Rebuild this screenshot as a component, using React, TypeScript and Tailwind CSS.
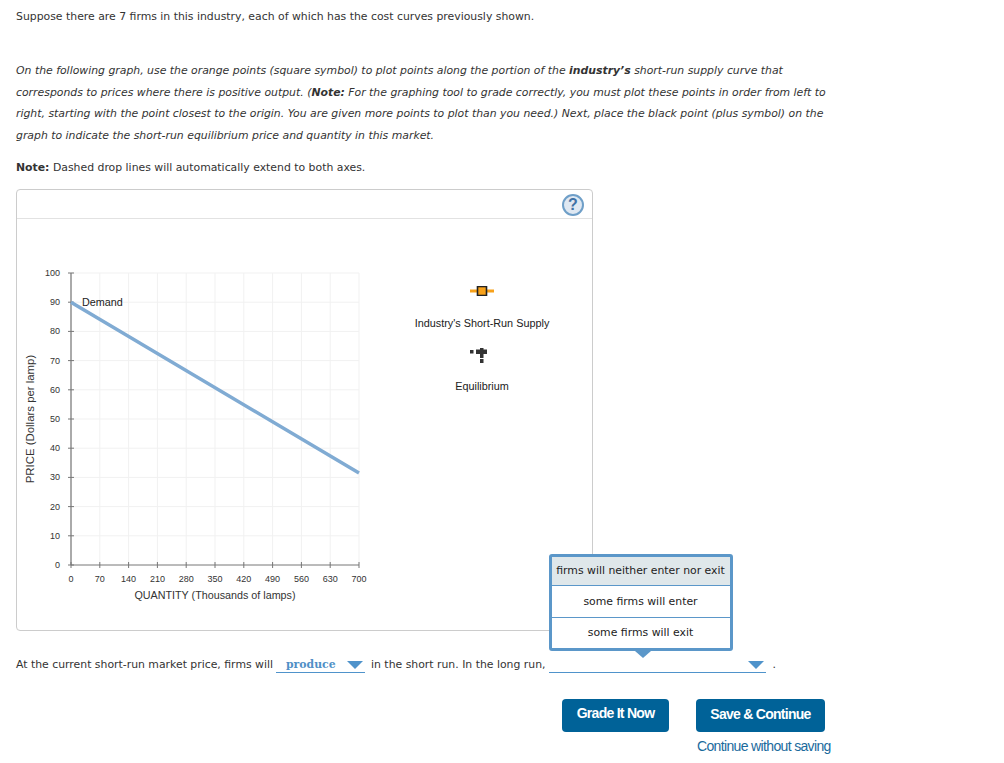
const xTicks = [0, 70, 140, 210, 280, 350, 420, 490, 560, 630, 700];
const yTicks = [0, 10, 20, 30, 40, 50, 60, 70, 80, 90, 100];

// chart origin inside the svg
const X0 = 54;
const Y0 = 346;
const xAt = (q: number) => X0 + (q / 700) * 288;
const yAt = (p: number) => Y0 - (p / 100) * 292;

const PriceChart = () => (
  <svg width="380" height="410" className="shrink-0" style={{ fontFamily: '"Liberation Sans", Arial, sans-serif' }}>
    {xTicks.slice(1).map((q) => (
      <line key={q} x1={xAt(q)} x2={xAt(q)} y1={yAt(100)} y2={Y0} stroke="#f1f1f1" />
    ))}
    {yTicks.slice(1).map((p) => (
      <line key={p} x1={X0} x2={xAt(700)} y1={yAt(p)} y2={yAt(p)} stroke="#f1f1f1" />
    ))}
    <line x1={X0} x2={X0} y1={yAt(100)} y2={Y0} stroke="#aaaaaa" strokeWidth="2" />
    <line x1={X0} x2={xAt(700)} y1={Y0} y2={Y0} stroke="#777777" />
    {yTicks.map((p) => (
      <g key={p}>
        <line x1={X0 - 3} x2={X0 + 3} y1={yAt(p)} y2={yAt(p)} stroke="#777777" />
        <text x={X0 - 11} y={yAt(p) + 3} textAnchor="end" fontSize="9" fill="#333333">
          {p}
        </text>
      </g>
    ))}
    {xTicks.map((q) => (
      <g key={q}>
        <line x1={xAt(q)} x2={xAt(q)} y1={Y0 - 3} y2={Y0 + 3} stroke="#777777" />
        <text x={xAt(q)} y={Y0 + 17} textAnchor="middle" fontSize="9" fill="#333333">
          {q}
        </text>
      </g>
    ))}
    <line x1={xAt(0)} y1={yAt(90)} x2={xAt(700)} y2={yAt(31.5)} stroke="#80abd3" strokeWidth="3.5" />
    <text x={65} y={87} fontSize="10.8" fill="#222222">
      Demand
    </text>
    <text x={198} y={380} textAnchor="middle" fontSize="10.75" fill="#333333">
      QUANTITY (Thousands of lamps)
    </text>
    <text transform="translate(17 200) rotate(-90)" textAnchor="middle" fontSize="11.4" fill="#333333">
      PRICE (Dollars per lamp)
    </text>
  </svg>
);

const SupplyIcon = () => (
  <svg width="24" height="10" viewBox="0 0 24 10">
    <rect x="0" y="3.5" width="24" height="3" fill="#f7a11a" />
    <rect x="7.5" y="0.5" width="9" height="9" fill="#f7a11a" stroke="#222222" strokeWidth="1.6" />
  </svg>
);

const EquilibriumIcon = () => (
  <svg width="18" height="15" viewBox="0 0 18 15">
    <rect x="0" y="2" width="3.5" height="3.5" fill="#333333" />
    <rect x="6" y="1.5" width="11" height="4.5" fill="#333333" />
    <rect x="10" y="0" width="3.5" height="10" fill="#333333" />
    <rect x="10" y="11" width="3.5" height="4" fill="#333333" />
  </svg>
);

const Caret = () => (
  <svg width="16" height="8" viewBox="0 0 16 8" className="shrink-0">
    <path d="M0 0H16L8 8Z" fill="#4f93cb" />
  </svg>
);

export default function App() {
  return (
    <div
      className="w-[1004px] h-[763px] overflow-hidden bg-white px-4 pt-[7px] text-[10.87px] text-[#333333]"
      style={{ fontFamily: '"DejaVu Sans", Verdana, sans-serif' }}
    >
      <p className="leading-[19px]">Suppose there are 7 firms in this industry, each of which has the cost curves previously shown.</p>

      <p className="mt-[34px] w-[830px] italic leading-[21.5px]">
        On the following graph, use the orange points (square symbol) to plot points along the portion of the{" "}
        <b>industry’s</b> short-run supply curve that corresponds to prices where there is positive output. (
        <b>Note:</b> For the graphing tool to grade correctly, you must plot these points in order from left to right,
        starting with the point closest to the origin. You are given more points to plot than you need.) Next, place
        the black point (plus symbol) on the graph to indicate the short-run equilibrium price and quantity in this
        market.
      </p>

      <p className="mt-[11px] leading-[21px]">
        <b>Note:</b> Dashed drop lines will automatically extend to both axes.
      </p>

      <div className="mt-[11px] h-[442px] w-[577px] rounded-[4px] border border-[#cccccc]">
        <div className="flex h-[29px] items-center justify-end border-b border-[#e2e2e2] pr-2 pt-[1px]">
          <div
            className="flex h-[22px] w-[22px] items-center justify-center rounded-full border-2 border-[#6f9fc8] bg-[#dfe8f2] text-[16px] font-bold text-[#3f72a6]"
            style={{ fontFamily: '"Liberation Sans", Arial, sans-serif' }}
          >
            ?
          </div>
        </div>
        <div className="flex">
          <PriceChart />
          <div
            className="ml-[5px] flex w-[160px] flex-col items-center pt-[67px] text-[10.85px] text-[#222222]"
            style={{ fontFamily: '"Liberation Sans", Arial, sans-serif' }}
          >
            <SupplyIcon />
            <span className="mt-[19px]">Industry's Short-Run Supply</span>
            <div className="mt-[17px] mr-[7px]">
              <EquilibriumIcon />
            </div>
            <span className="mt-[15px]">Equilibrium</span>
          </div>
        </div>
      </div>

      <div className="mt-[26px] flex items-end whitespace-nowrap leading-[16px]">
        <span>At the current short-run market price, firms will</span>
        <div className="ml-[3px] flex h-[16px] w-[89px] items-center justify-between border-b border-[#4f93cb] pl-[10px] pr-[2px]">
          <span className="font-bold text-[#4f8fc6]" style={{ fontFamily: '"DejaVu Serif", serif' }}>
            produce
          </span>
          <Caret />
        </div>
        <span className="ml-[6px]">in the short run. In the long run,</span>
        <div className="relative ml-[3px] flex h-[16px] w-[217px] items-center justify-end border-b border-[#4f93cb] pr-[2px]">
          <Caret />
          <div className="absolute bottom-[21px] left-0 w-[184px] rounded-[3px] border-[3px] border-[#5b97c9] bg-white text-center text-[#222222]">
            <div className="flex h-[29px] items-center justify-center border-b border-[#5b97c9] bg-[#dfe7ea]">
              firms will neither enter nor exit
            </div>
            <div className="flex h-[32px] items-center justify-center border-b border-[#5b97c9]">some firms will enter</div>
            <div className="flex h-[30px] items-center justify-center">some firms will exit</div>
            <div className="absolute -bottom-[10px] left-[83px] h-0 w-0 border-x-[8px] border-t-[7px] border-x-transparent border-t-[#5b97c9]" />
          </div>
        </div>
        <span className="ml-[7px]">.</span>
      </div>

      <div
        className="mt-[26px] flex justify-start pl-[546px] tracking-[-0.73px]"
        style={{ fontFamily: '"Liberation Sans", Arial, sans-serif' }}
      >
        <button className="h-[33px] w-[107px] rounded-[4px] bg-[#006298] pb-[4px] text-[14px] font-bold text-white">
          Grade It Now
        </button>
        <div className="ml-[27px] flex flex-col items-start">
          <button className="h-[33px] w-[129px] rounded-[4px] bg-[#006298] pb-[2px] text-[14px] font-bold text-white">
            Save &amp; Continue
          </button>
          <a className="mt-[5px] whitespace-nowrap pl-[1px] text-[14px] leading-[18px] tracking-[-0.65px] text-[#1a6a9c]">Continue without saving</a>
        </div>
      </div>
    </div>
  );
}
